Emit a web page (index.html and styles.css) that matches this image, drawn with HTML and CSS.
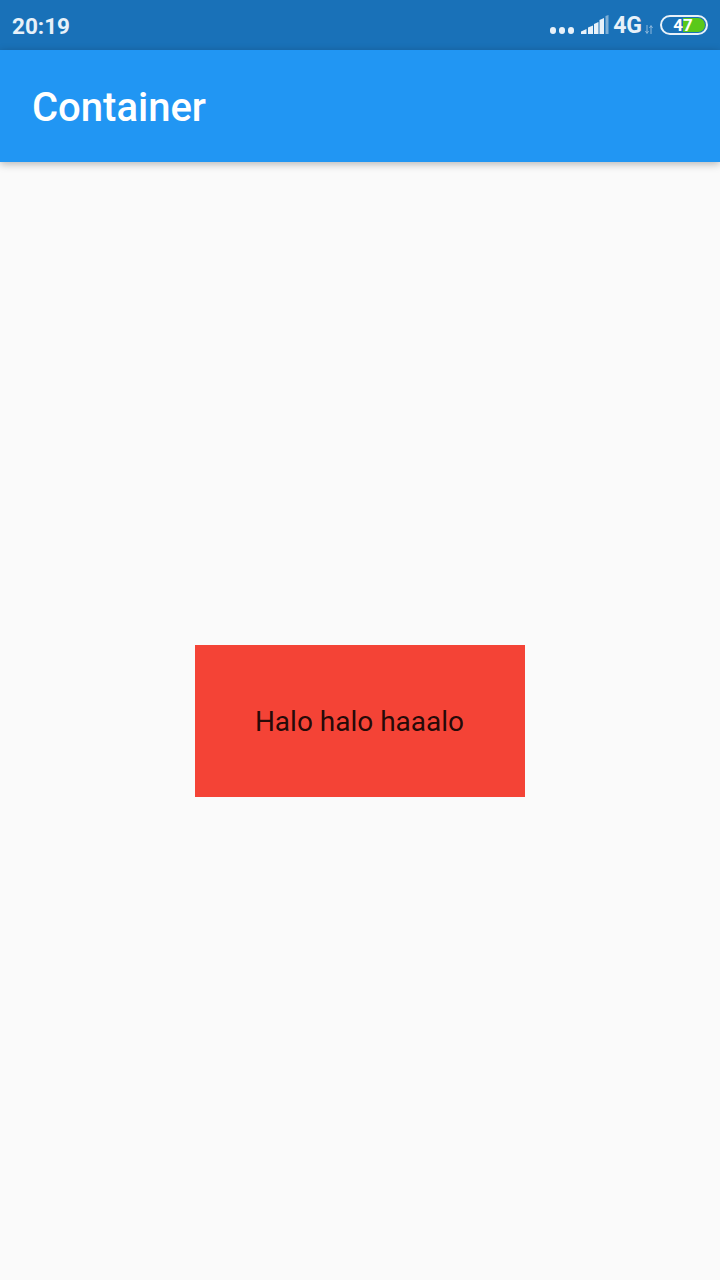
FILE: index.html
```html
<!DOCTYPE html>
<html lang="en">
<head>
    <meta charset="UTF-8">
    <meta name="viewport" content="width=device-width, initial-scale=1.0">
    <title>Container</title>
    <link rel="stylesheet" href="styles.css">
</head>
<body>
    <div class="status-bar">
        <span class="time">20:19</span>
        <div class="status-icons">
            <div class="dots">
                <span class="dot"></span>
                <span class="dot"></span>
                <span class="dot"></span>
            </div>
            <svg class="signal" width="28" height="20" viewBox="0 0 28 20">
                <polygon points="0,19 0,16.500 5.500,14 5.500,19" fill="#e8f1f9"/>
                <polygon points="7,19 7,12.500 12,10.500 12,19" fill="#e8f1f9"/>
                <polygon points="13,19 13,9 17.500,7 17.500,19" fill="#e8f1f9"/>
                <polygon points="18.500,19 18.500,5 23,3 23,19" fill="#e8f1f9"/>
                <polygon points="24.500,19 24.500,1 27.500,0 27.500,19" fill="#7fafd6"/>
            </svg>
            <span class="network">4G</span>
            <svg class="arrows" width="8" height="10" viewBox="0 0 8 10">
                <path d="M2 0v8M0.500 6l1.500 2.500 1.500-2.500M6 9V1M4.500 3l1.500-2.500 1.500 2.500" stroke="#8fb9dc" stroke-width="1" fill="none"/>
            </svg>
            <div class="battery">
                <div class="battery-fill"></div>
                <span class="battery-text">47</span>
            </div>
        </div>
    </div>
    <header class="app-bar">
        <h1 class="app-title">Container</h1>
    </header>
    <main class="content">
        <div class="box">Halo halo haaalo</div>
    </main>
</body>
</html>
```

FILE: styles.css
```css
* {
    box-sizing: border-box;
}

body {
    font-family: Roboto, sans-serif;
    background-color: #fafafa;
    margin: 0;
    padding: 0;
    height: 1280px;
    display: flex;
    flex-direction: column;
    overflow: hidden;
}

.status-bar {
    height: 50px;
    background: #1971b8;
    color: #e8f1f9;
    display: flex;
    justify-content: space-between;
    align-items: center;
    padding: 1px 12px 0;
    flex-shrink: 0;
}

.time {
    font-size: 22.500px;
    font-weight: 700;
}

.status-icons {
    display: flex;
    align-items: center;
}

.dots {
    display: flex;
    gap: 2.500px;
    margin-top: 10px;
    margin-right: 7px;
}

.dot {
    width: 6.500px;
    height: 6.500px;
    border-radius: 50%;
    background: #e8f1f9;
}

.signal {
    margin-top: -2px;
    margin-right: 4px;
}

.network {
    font-size: 23px;
    font-weight: 700;
}

.arrows {
    margin-top: 9px;
    margin-left: 3px;
    margin-right: 7px;
}

.battery {
    width: 48px;
    height: 20px;
    margin-top: -2px;
    border: 2px solid #e8f1f9;
    border-radius: 10px;
    display: flex;
    justify-content: center;
    align-items: center;
    position: relative;
    overflow: hidden;
}

.battery-fill {
    position: absolute;
    left: 21px;
    right: 1px;
    top: 1px;
    bottom: 1px;
    background: #5ac81a;
    border-radius: 0 7px 7px 0;
}

.battery-text {
    position: relative;
    left: -1px;
    font-size: 17px;
    font-weight: 700;
    color: #ffffff;
}

.app-bar {
    height: 112px;
    background: #2196f3;
    display: flex;
    align-items: center;
    padding: 2px 32px 0;
    box-shadow: 0 2px 8px rgba(0, 0, 0, 0.28);
    flex-shrink: 0;
    position: relative;
}

.app-title {
    margin: 0;
    color: #fff;
    font-size: 40px;
    font-weight: 500;
}

.content {
    flex: 1;
    display: flex;
    justify-content: center;
    align-items: center;
}

.box {
    width: 330px;
    height: 152px;
    padding-right: 1px;
    background: #f44336;
    color: rgba(0, 0, 0, 0.87);
    font-size: 28px;
    display: flex;
    justify-content: center;
    align-items: center;
}
```
